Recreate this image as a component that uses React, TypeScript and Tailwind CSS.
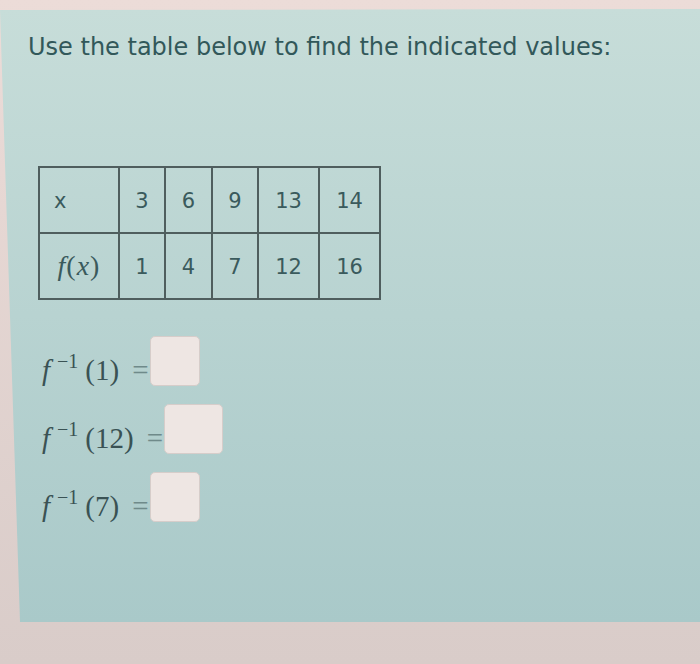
import React from "react";

const Eq = ({ arg, boxW }: { arg: string; boxW: string }) => (
  <div className="flex items-end h-[50px]">
    <span className="font-['Liberation_Serif',serif] text-[29px] text-[#3a5254] leading-none mb-[1px] whitespace-nowrap">
      <span className="italic">f</span>
      <span className="inline-block ml-[7px] text-[20px] relative -top-[12px]">−1</span>
      <span className="ml-[7px]">({arg})</span>
      <span className="ml-[13px] text-[#6f8a8a]">=</span>
    </span>
    <div className={`${boxW} h-[50px] ml-[1px] rounded-[5px] bg-[#eee6e3] border border-[#d6cdca]`} />
  </div>
);

export default function App() {
  const xs = ["3", "6", "9", "13", "14"];
  const fs = ["1", "4", "7", "12", "16"];
  const widths = ["w-[46px]", "w-[47px]", "w-[46px]", "w-[61px]", "w-[61px]"];
  return (
    <div className="w-[700px] h-[664px] bg-gradient-to-b from-[#ecdcd8] to-[#d9ccc9] overflow-hidden">
      <div className="mt-[9px] h-[613px] bg-gradient-to-b from-[#c7ddd9] to-[#a9c9c9] [clip-path:polygon(0_1px,100%_0,100%_100%,20px_100%)] pt-[23px]">
        <div className="pl-[28px] font-['DejaVu_Sans',sans-serif] text-[24px] leading-[30px] text-[#32585a] whitespace-nowrap">
          Use the table below to find the indicated values:
        </div>
        <div className="ml-[38px] mt-[104px]">
          <table className="border-collapse font-['DejaVu_Sans',sans-serif] text-[21px] text-[#3a5a5c]">
            <tbody>
              <tr className="h-[66px]">
                <td className="w-[80px] border-2 border-[#4f5e5e] pl-[14px] pt-[4px] text-left">x</td>
                {xs.map((v, i) => (
                  <td key={i} className={`${widths[i]} border-2 border-[#4f5e5e] pt-[4px] text-center`}>
                    {v}
                  </td>
                ))}
              </tr>
              <tr className="h-[66px]">
                <td className="border-2 border-[#4f5e5e] text-center font-['Liberation_Serif',serif] text-[28px] tracking-[1px]">
                  <span className="italic">f</span>(<span className="italic">x</span>)
                </td>
                {fs.map((v, i) => (
                  <td key={i} className="border-2 border-[#4f5e5e] pt-[4px] text-center">
                    {v}
                  </td>
                ))}
              </tr>
            </tbody>
          </table>
        </div>
        <div className="ml-[42px] mt-[36px] flex flex-col gap-[18px]">
          <Eq arg="1" boxW="w-[50px]" />
          <Eq arg="12" boxW="w-[59px]" />
          <Eq arg="7" boxW="w-[50px]" />
        </div>
      </div>
    </div>
  );
}
